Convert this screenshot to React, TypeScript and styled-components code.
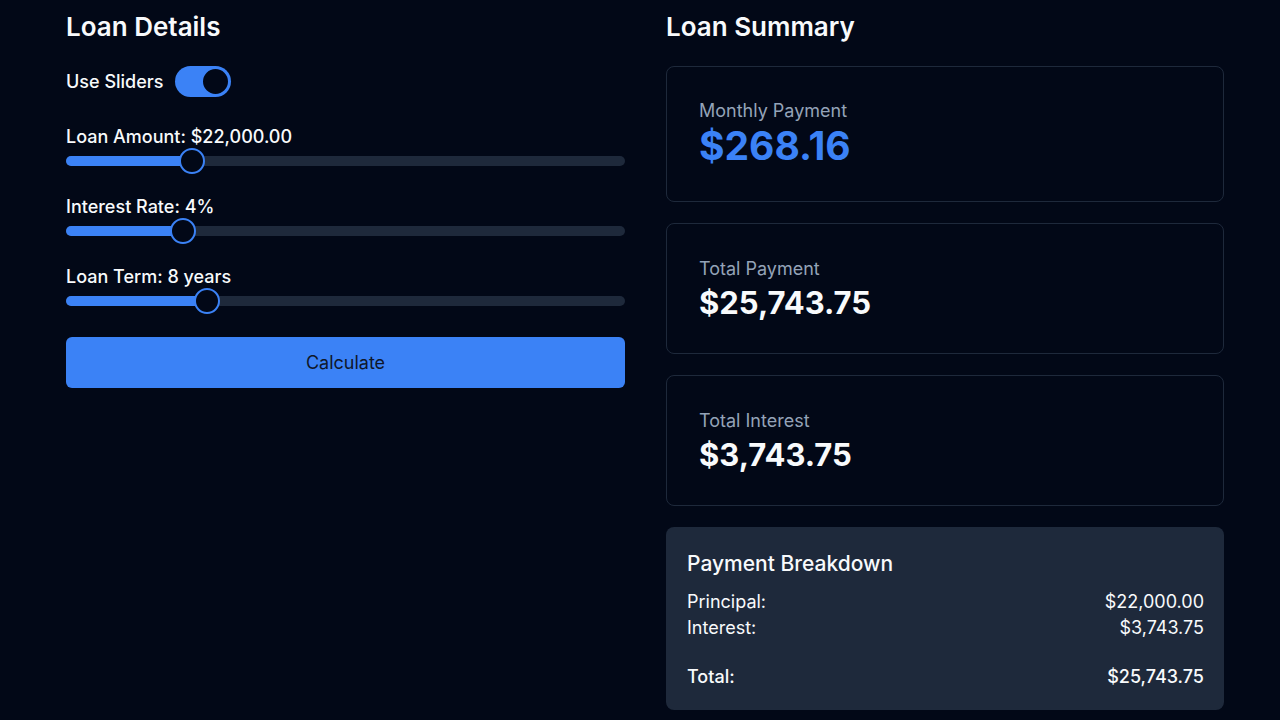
import React from "react";
import styled, { createGlobalStyle } from "styled-components";

const Global = createGlobalStyle`
  html, body { margin: 0; padding: 0; background: #020817; }
  body { font-family: Inter, "Noto Sans", sans-serif; color: #f8fafc; }
  * { box-sizing: border-box; }
`;

const Page = styled.div`
  display: grid;
  grid-template-columns: 559px 558px;
  column-gap: 41px;
  padding: 11px 0 40px 66px;
  min-height: 720px;
  background: #020817;
`;

const Column = styled.section`
  display: flex;
  flex-direction: column;
`;

const Heading = styled.h2`
  margin: 0 0 23px;
  font-size: 26px;
  line-height: 32px;
  font-weight: 600;
  color: #f8fafc;
`;

const ToggleRow = styled.label`
  display: flex;
  align-items: center;
  gap: 12px;
  font-size: 18px;
  font-weight: 500;
  line-height: 24px;
  margin-bottom: 27px;
`;

const Switch = styled.span<{ $on: boolean }>`
  display: flex;
  justify-content: ${(p) => (p.$on ? "flex-end" : "flex-start")};
  align-items: center;
  width: 56px;
  height: 31px;
  border-radius: 16px;
  background: ${(p) => (p.$on ? "#3b82f6" : "#1e293b")};
`;

const Knob = styled.span`
  width: 29px;
  height: 29px;
  margin-right: 1px;
  border-radius: 50%;
  background: #020817;
  border: 2px solid #3b82f6;
`;

const Field = styled.div`
  display: flex;
  flex-direction: column;
  margin-bottom: 20px;
  &:last-of-type { margin-bottom: 23px; }
`;

const FieldLabel = styled.div`
  font-size: 18px;
  font-weight: 500;
  line-height: 22px;
  padding-top: 2px;
  color: #f8fafc;
`;

const SliderRoot = styled.div`
  position: relative;
  height: 26px;
  display: flex;
  align-items: center;
`;

const Track = styled.div`
  width: 100%;
  height: 10px;
  border-radius: 5px;
  background: #1e293b;
  overflow: hidden;
`;

const Fill = styled.div`
  height: 100%;
  background: #3b82f6;
`;

const Thumb = styled.div`
  position: absolute;
  top: 0;
  width: 26px;
  height: 26px;
  margin-left: -13px;
  border-radius: 50%;
  background: #020817;
  border: 2px solid #3b82f6;
`;

const Button = styled.button`
  height: 51px;
  border: none;
  border-radius: 6px;
  background: #3b82f6;
  color: #0f172a;
  font-family: Inter, sans-serif;
  font-size: 18px;
  font-weight: 400;
  cursor: pointer;
`;

const Cards = styled.div`
  display: flex;
  flex-direction: column;
  gap: 21px;
`;

const Card = styled.div<{ $big?: boolean }>`
  border: 1px solid #1e293b;
  border-radius: 8px;
  padding: ${(p) => (p.$big ? "30px 32px 35px" : "31px 32px 32px")};
  display: flex;
  flex-direction: column;
`;

const CardLabel = styled.div`
  font-size: 18px;
  line-height: 28px;
  color: #94a3b8;
`;

const CardValue = styled.div<{ $big?: boolean }>`
  margin-top: ${(p) => (p.$big ? "1px" : "2px")};
  font-size: ${(p) => (p.$big ? "39px" : "31px")};
  line-height: ${(p) => (p.$big ? "40px" : "36px")};
  font-weight: 700;
  color: ${(p) => (p.$big ? "#3b82f6" : "#f8fafc")};
`;

const Breakdown = styled.div`
  background: #1e293b;
  border-radius: 8px;
  padding: 23px 20px 20px 21px;
  display: flex;
  flex-direction: column;
`;

const BreakdownTitle = styled.h3`
  margin: 0 0 11px;
  font-size: 21px;
  line-height: 28px;
  font-weight: 500;
`;

const Row = styled.div<{ $total?: boolean }>`
  display: flex;
  justify-content: space-between;
  font-size: 18px;
  line-height: 26px;
  margin-top: ${(p) => (p.$total ? "23px" : "0")};
  font-weight: ${(p) => (p.$total ? 500 : 400)};
`;

function Slider({ label, pct }: { label: string; pct: number }) {
  return (
    <Field>
      <FieldLabel>{label}</FieldLabel>
      <SliderRoot>
        <Track>
          <Fill style={{ width: `calc(13px + (100% - 26px) * ${pct})` }} />
        </Track>
        <Thumb style={{ left: `calc(13px + (100% - 26px) * ${pct})` }} />
      </SliderRoot>
    </Field>
  );
}

export default function App() {
  return (
    <>
      <Global />
      <Page>
        <Column>
          <Heading>Loan Details</Heading>
          <ToggleRow>
            Use Sliders
            <Switch $on>
              <Knob />
            </Switch>
          </ToggleRow>
          <Slider label="Loan Amount: $22,000.00" pct={0.212} />
          <Slider label="Interest Rate: 4%" pct={0.196} />
          <Slider label="Loan Term: 8 years" pct={0.241} />
          <Button>Calculate</Button>
        </Column>
        <Column>
          <Heading>Loan Summary</Heading>
          <Cards>
            <Card $big>
              <CardLabel>Monthly Payment</CardLabel>
              <CardValue $big>$268.16</CardValue>
            </Card>
            <Card>
              <CardLabel>Total Payment</CardLabel>
              <CardValue>$25,743.75</CardValue>
            </Card>
            <Card>
              <CardLabel>Total Interest</CardLabel>
              <CardValue>$3,743.75</CardValue>
            </Card>
            <Breakdown>
              <BreakdownTitle>Payment Breakdown</BreakdownTitle>
              <Row>
                <span>Principal:</span>
                <span>$22,000.00</span>
              </Row>
              <Row>
                <span>Interest:</span>
                <span>$3,743.75</span>
              </Row>
              <Row $total>
                <span>Total:</span>
                <span>$25,743.75</span>
              </Row>
            </Breakdown>
          </Cards>
        </Column>
      </Page>
    </>
  );
}
